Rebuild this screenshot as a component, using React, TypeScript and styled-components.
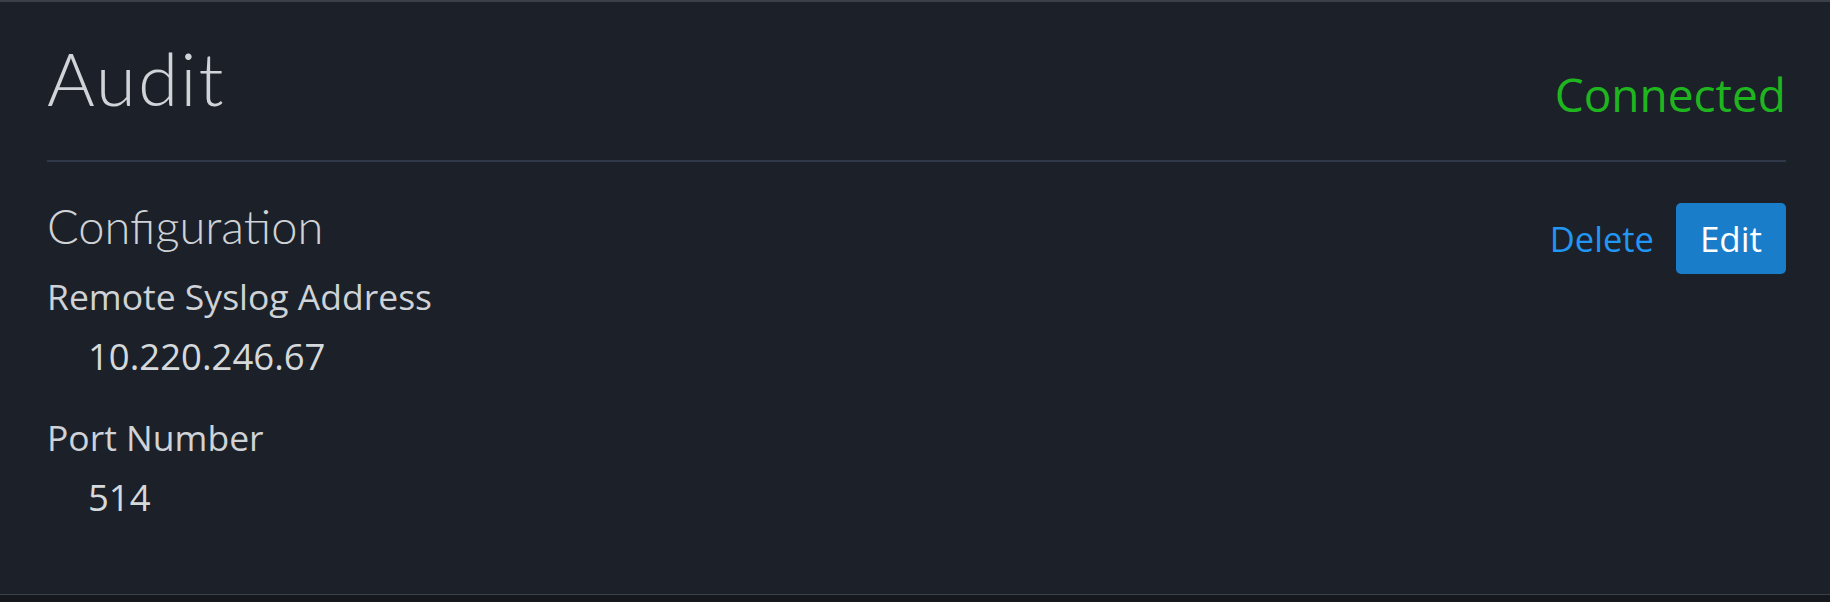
import React from 'react'
import styled, {createGlobalStyle} from 'styled-components'

const GlobalStyle = createGlobalStyle`
  html, body {
    margin: 0;
    padding: 0;
    background: #15191e;
  }
  body {
    font-family: "Open Sans", "Noto Sans", sans-serif;
  }
`

const S = {
    Panel: styled.section`
      width: 1830px;
      height: 602px;
      box-sizing: border-box;
      background: #1c2129;
      border-top: 2px solid #3b4048;
      border-bottom: 7px solid #15191e;
      box-shadow: inset 0 -1px 0 #3b4048;
      padding: 0 44px 0 47px;
    `,
    Header: styled.div`
      display: flex;
      justify-content: space-between;
      align-items: flex-end;
      height: 160px;
      border-bottom: 2px solid #2f3846;
      box-sizing: border-box;
    `,
    Title: styled.h1`
      margin: 0 0 45px;
      font-family: Lato, sans-serif;
      font-size: 73px;
      font-weight: 300;
      line-height: 1;
      color: #d0d3d7;
      letter-spacing: 2px;
    `,
    Status: styled.span<{ok: boolean}>`
      margin-bottom: 43px;
      font-size: 46px;
      line-height: 1;
      color: ${p => p.ok ? '#1fb51f' : '#e04040'};
    `,
    Body: styled.div`
      display: flex;
      justify-content: space-between;
      align-items: flex-start;
      padding-top: 41px;
    `,
    Section: styled.div``,
    SectionTitle: styled.h2`
      margin: 0 0 29px;
      font-family: Lato, sans-serif;
      font-size: 47px;
      font-weight: 300;
      line-height: 1;
      color: #cfd2d6;
    `,
    Field: styled.dl`
      margin: 0 0 46px;
    `,
    Label: styled.dt`
      font-size: 35.5px;
      line-height: 1;
      color: #cfd2d6;
      margin-bottom: 23px;
    `,
    Value: styled.dd`
      margin: 0 0 0 41px;
      font-size: 36.5px;
      line-height: 1;
      color: #d6d9dc;
    `,
    Actions: styled.div`
      display: flex;
      align-items: center;
      gap: 22px;
    `,
    LinkButton: styled.button`
      background: none;
      border: none;
      padding: 0;
      font-family: inherit;
      font-size: 34.5px;
      color: #2196f3;
      cursor: pointer;
    `,
    PrimaryButton: styled.button`
      width: 110px;
      height: 71px;
      background: #1a7dca;
      border: none;
      border-radius: 5px;
      font-family: inherit;
      font-size: 35px;
      color: #fff;
      cursor: pointer;
    `,
}

const fields = [
    {label: 'Remote Syslog Address', value: '10.220.246.67'},
    {label: 'Port Number', value: '514'},
]

export default function App() {
    return (
        <>
            <GlobalStyle/>
            <S.Panel>
                <S.Header>
                    <S.Title>Audit</S.Title>
                    <S.Status ok={true}>Connected</S.Status>
                </S.Header>
                <S.Body>
                    <S.Section>
                        <S.SectionTitle>Configuration</S.SectionTitle>
                        {fields.map(f => (
                            <S.Field key={f.label}>
                                <S.Label>{f.label}</S.Label>
                                <S.Value>{f.value}</S.Value>
                            </S.Field>
                        ))}
                    </S.Section>
                    <S.Actions>
                        <S.LinkButton>Delete</S.LinkButton>
                        <S.PrimaryButton>Edit</S.PrimaryButton>
                    </S.Actions>
                </S.Body>
            </S.Panel>
        </>
    )
}
